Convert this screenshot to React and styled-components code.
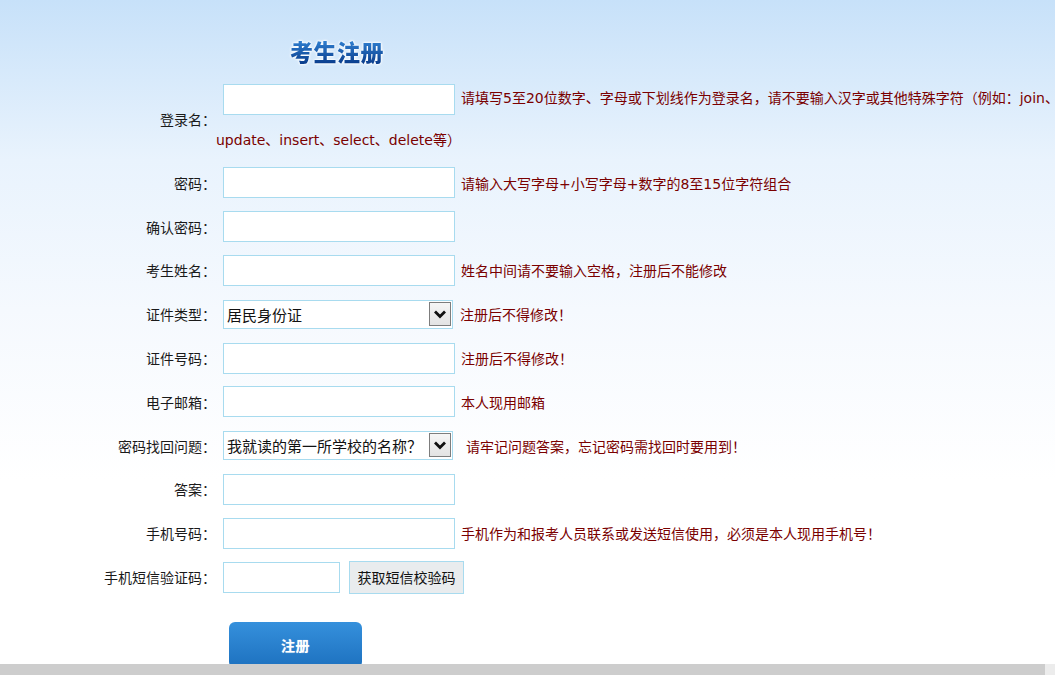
import React from "react";
import styled, { createGlobalStyle } from "styled-components";

const Global = createGlobalStyle`
  html, body { margin: 0; padding: 0; }
  html {
    background: linear-gradient(to bottom, #c7e1f9 0px, #e9f3fd 160px, #f5f9fe 310px, #ffffff 480px) no-repeat;
    background-color: #fff;
  }
  body {
    overflow: hidden;
    font-family: "Liberation Sans", "Noto Sans CJK SC", sans-serif;
    font-size: 14px;
    color: #1a1a1a;
  }
`;

const Page = styled.div`
  width: 1075px;
  min-height: 675px;
`;

const Header = styled.div`
  box-sizing: border-box;
  height: 77px;
  padding: 34px 0 0 290px;
`;

const Title = styled.h1`
  margin: 0;
  font-family: "Noto Sans CJK SC", sans-serif;
  font-size: 23px;
  font-weight: 900;
  line-height: 34px;
  letter-spacing: 0.5px;
  color: #1559ad;
  background: linear-gradient(to bottom, #2f7fd0 20%, #0b3f8f 85%);
  -webkit-background-clip: text;
  background-clip: text;
  -webkit-text-fill-color: transparent;
  filter: drop-shadow(0 0 1px #fff) drop-shadow(0 0 1px #fff);
`;

const Form = styled.div`
  display: grid;
  grid-template-columns: 216px 859px;
`;

const Label = styled.div`
  display: flex;
  align-items: center;
  justify-content: flex-end;
  height: ${(p) => (p.$tall ? "84px" : "43.8px")};
  white-space: nowrap;
`;

const Field = styled.div`
  display: flex;
  align-items: center;
  height: 43.8px;
  padding-left: 7px;
  box-sizing: border-box;
`;

const FlowField = styled.div`
  line-height: 42px;
  height: 84px;
`;

const TextInput = styled.input`
  box-sizing: border-box;
  width: ${(p) => p.$w || "232px"};
  height: 31px;
  margin: 0;
  border: 1px solid #a8dbef;
  background: #fff;
  outline: none;
  padding: 0 4px;
  font-size: 14px;
  vertical-align: middle;
  ${(p) => (p.$inline ? "margin-left: 7px;" : "")}
`;

const Hint = styled.span`
  font-family: "DejaVu Sans", "Noto Sans CJK SC", sans-serif;
  color: #7a0000;
  margin-left: ${(p) => p.$gap || "6px"};
  white-space: ${(p) => (p.$wrap ? "normal" : "nowrap")};
`;

const SelectWrap = styled.div`
  position: relative;
  box-sizing: border-box;
  width: 230px;
  height: 29px;
  border: 1px solid #a8dbef;
  background: #fff;
`;

const Select = styled.select`
  appearance: none;
  -webkit-appearance: none;
  box-sizing: border-box;
  width: 100%;
  height: 100%;
  border: none;
  outline: none;
  background: transparent;
  padding: 0 26px 0 3px;
  font-family: "Noto Sans CJK SC", sans-serif;
  font-size: 15px;
  color: #111;
`;

const ArrowBox = styled.span`
  position: absolute;
  top: 1px;
  right: 1px;
  width: 22px;
  height: 24px;
  box-sizing: border-box;
  border: 1px solid #7d7d7d;
  background: linear-gradient(to bottom, #f6f6f6, #e3e3e3);
  display: flex;
  align-items: center;
  justify-content: center;
  pointer-events: none;
`;

const SmsButton = styled.button`
  box-sizing: border-box;
  margin-left: 9px;
  width: 115px;
  height: 33px;
  border: 1px solid #a8dbef;
  background: #e9ecee;
  font-family: "Noto Sans CJK SC", sans-serif;
  font-size: 14px;
  color: #111;
  padding: 0;
`;

const SubmitRow = styled.div`
  padding: 23px 0 0 229px;
`;

const SubmitButton = styled.button`
  width: 133px;
  height: 46px;
  border: none;
  border-radius: 6px;
  background: linear-gradient(to bottom, #3590dc, #1d71bf);
  color: #fff;
  font-family: "Noto Sans CJK SC", sans-serif;
  font-weight: 700;
  font-size: 14px;
  letter-spacing: 0.5px;
  text-shadow: 0 0 1px rgba(255, 255, 255, 0.6);
  padding: 0;
`;

const ScrollBar = styled.div`
  position: fixed;
  left: 0;
  right: 0;
  bottom: 0;
  height: 11px;
  background: #ececec;
  display: flex;
`;

const Thumb = styled.div`
  flex: 1;
  margin-right: 10px;
  background: #cdcdcd;
`;

const Chevron = () => (
  <svg width="14" height="10" viewBox="0 0 14 10">
    <path d="M2 2.5 L7 7.5 L12 2.5" fill="none" stroke="#111" strokeWidth="2.8" />
  </svg>
);

const DropSelect = ({ options }) => (
  <SelectWrap>
    <Select defaultValue={options[0]}>
      {options.map((o) => (
        <option key={o}>{o}</option>
      ))}
    </Select>
    <ArrowBox>
      <Chevron />
    </ArrowBox>
  </SelectWrap>
);

const rows = [
  { label: "密码：", hint: "请输入大写字母+小写字母+数字的8至15位字符组合" },
  { label: "确认密码：" },
  { label: "考生姓名：", hint: "姓名中间请不要输入空格，注册后不能修改" },
  { label: "证件类型：", select: ["居民身份证", "护照", "军官证"], hint: "注册后不得修改！", gap: "7px" },
  { label: "证件号码：", hint: "注册后不得修改！" },
  { label: "电子邮箱：", hint: "本人现用邮箱" },
  {
    label: "密码找回问题：",
    select: ["我就读的第一所学校的名称？", "我母亲的名字？", "我的出生地？"],
    hint: "请牢记问题答案，忘记密码需找回时要用到！",
    gap: "13px",
  },
  { label: "答案：" },
  { label: "手机号码：", hint: "手机作为和报考人员联系或发送短信使用，必须是本人现用手机号！" },
];

export default function App() {
  return (
    <>
      <Global />
      <Page>
        <Header>
          <Title>考生注册</Title>
        </Header>
        <Form>
          <Label $tall>登录名：</Label>
          <FlowField>
            <TextInput $inline type="text" />
            <Hint $gap="6px" $wrap>
              请填写5至20位数字、字母或下划线作为登录名，请不要输入汉字或其他特殊字符（例如：join、update、insert、select、delete等）
            </Hint>
          </FlowField>
          {rows.map((r) => (
            <React.Fragment key={r.label}>
              <Label>{r.label}</Label>
              <Field>
                {r.select ? <DropSelect options={r.select} /> : <TextInput type="text" />}
                {r.hint && <Hint $gap={r.gap}>{r.hint}</Hint>}
              </Field>
            </React.Fragment>
          ))}
          <Label>手机短信验证码：</Label>
          <Field>
            <TextInput type="text" $w="117px" />
            <SmsButton type="button">获取短信校验码</SmsButton>
          </Field>
        </Form>
        <SubmitRow>
          <SubmitButton type="button">注册</SubmitButton>
        </SubmitRow>
      </Page>
      <ScrollBar>
        <Thumb />
      </ScrollBar>
    </>
  );
}
